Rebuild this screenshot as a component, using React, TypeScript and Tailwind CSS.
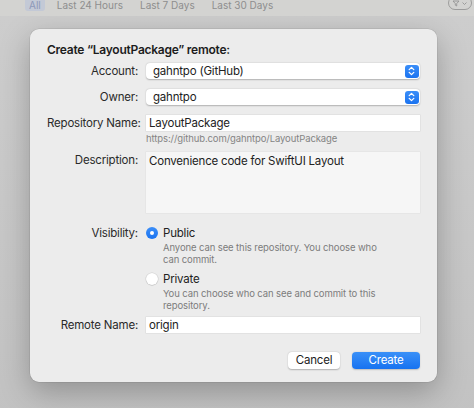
import React from 'react';

const font = { fontFamily: 'Inter, "Liberation Sans", sans-serif' };

const Stepper = () => (
  <span className="flex h-[13px] w-[14px] items-center justify-center rounded-[3px] bg-gradient-to-b from-[#3b8ef8] to-[#1a73f0]">
    <svg width="7" height="10" viewBox="0 0 7 10" fill="none" stroke="white" strokeWidth="1.3" strokeLinecap="round" strokeLinejoin="round">
      <path d="M1.2 3.6 3.5 1.4 5.8 3.6" />
      <path d="M1.2 6.4 3.5 8.6 5.8 6.4" />
    </svg>
  </span>
);

const Popup = ({ value }: { value: string }) => (
  <div className="flex h-[16px] items-center justify-between rounded-[4px] bg-white pl-[7px] pr-[1.5px] shadow-[0_0.5px_1.5px_rgba(0,0,0,0.25)]">
    <span className="text-[11.5px] leading-[16px] tracking-[-0.2px] text-[#222]">{value}</span>
    <Stepper />
  </div>
);

const Field = ({ value }: { value: string }) => (
  <div className="flex h-[16px] items-center bg-white pl-[3px] shadow-[0_0_0_0.5px_rgba(0,0,0,0.08)]">
    <span className="text-[11.5px] leading-[16px] tracking-[-0.2px] text-[#222]">{value}</span>
  </div>
);

const Label = ({ children }: { children: React.ReactNode }) => (
  <span className="whitespace-nowrap text-right text-[11.5px] leading-[16px] tracking-[-0.2px] text-[#2a2a2a]">{children}</span>
);

const App = () => {
  return (
    <div className="relative h-[408px] w-[474px] overflow-hidden bg-[#c9c9c9]" style={font}>
      {/* Window behind */}
      <div className="relative flex h-[16px] items-start bg-[#d3d3d1] pl-[25px] text-[10px] leading-[10px] text-[#8e8e8e]">
        <span className="rounded-b-[3px] bg-[#c3c9d6] px-[4px] pb-[1px] text-[#8e98b8]">All</span>
        <span className="ml-[12px]">Last 24 Hours</span>
        <span className="ml-[17px]">Last 7 Days</span>
        <span className="ml-[17px]">Last 30 Days</span>
        <svg className="absolute right-[2px] top-[-4px]" width="24" height="14" viewBox="0 0 24 14" fill="none" stroke="#8e8e8e" strokeWidth="0.8">
          <rect x="0.5" y="0.5" width="23" height="13" rx="6.5" />
          <path d="M5 5h6l-2.3 2.6v2.4l-1.4-.8V7.6z" />
          <path d="M14.5 6.5 16.5 8.5 18.5 6.5" />
        </svg>
      </div>

      <div className="bg-gradient-to-b from-[#cdcdcd] to-[#c2c2c2] pl-[30px] pt-[13px]">
        {/* Dialog */}
        <div className="h-[353px] w-[407px] rounded-[9px] bg-[#ececec] px-[17px] pt-[14px] shadow-[0_10px_30px_rgba(0,0,0,0.26),0_0_0_0.5px_rgba(0,0,0,0.12)]">
          <div className="text-[12px] font-semibold leading-[14px] tracking-[-0.25px] text-[#1c1c1c]">Create “LayoutPackage” remote:</div>

          <div className="mt-[6px] grid grid-cols-[91px_1fr] items-center gap-x-[8px]">
            <Label>Account:</Label>
            <Popup value="gahntpo (GitHub)" />

            <div className="col-span-2 h-[10px]" />
            <Label>Owner:</Label>
            <Popup value="gahntpo" />

            <div className="col-span-2 h-[10px]" />
            <Label>Repository Name:</Label>
            <Field value="LayoutPackage" />

            <div />
            <span className="text-[9.5px] leading-[15px] tracking-[-0.1px] text-[#848484]">https://github.com/gahntpo/LayoutPackage</span>

            <div className="col-span-2 h-[6px]" />
            <span className="self-start text-right text-[11.5px] leading-[16px] tracking-[-0.2px] text-[#2a2a2a]">Description:</span>
            <div className="h-[61px] bg-[#f6f6f6] pl-[3px] pt-[1px] text-[11.5px] leading-[16px] tracking-[-0.2px] text-[#222] shadow-[0_0_0_0.5px_rgba(0,0,0,0.05)]">
              Convenience code for SwiftUI Layout
            </div>

            <div className="col-span-2 h-[12.5px]" />
            <span className="self-start text-right text-[11.5px] leading-[15px] tracking-[-0.2px] text-[#2a2a2a]">Visibility:</span>
            <div className="flex flex-col">
              <div className="flex items-center gap-[5px]">
                <span className="flex h-[12px] w-[12px] items-center justify-center rounded-full bg-gradient-to-b from-[#3b8ef8] to-[#1a73f0]">
                  <span className="h-[4.5px] w-[4.5px] rounded-full bg-white" />
                </span>
                <span className="text-[11.5px] leading-[15px] tracking-[-0.2px] text-[#222]">Public</span>
              </div>
              <p className="ml-[17px] mt-[1.5px] text-[9.5px] leading-[11.7px] tracking-[-0.1px] text-[#7c7c7c]">
                Anyone can see this repository. You choose who
                <br />
                can commit.
              </p>
              <div className="mt-[6.5px] flex items-center gap-[5px]">
                <span className="h-[12px] w-[12px] rounded-full bg-white shadow-[0_0_0_0.5px_rgba(0,0,0,0.12),0_0.5px_1px_rgba(0,0,0,0.15)]" />
                <span className="text-[11.5px] leading-[15px] tracking-[-0.2px] text-[#222]">Private</span>
              </div>
              <p className="ml-[17px] mt-[1.5px] text-[9.5px] leading-[11.7px] tracking-[-0.1px] text-[#7c7c7c]">
                You can choose who can see and commit to this
                <br />
                repository.
              </p>
            </div>

            <div className="col-span-2 h-[5px]" />
            <Label>Remote Name:</Label>
            <Field value="origin" />
          </div>

          <div className="mt-[19px] flex justify-end gap-[12px]">
            <button className="flex h-[17px] w-[52px] items-center justify-center rounded-[4px] bg-white text-[11.5px] tracking-[-0.2px] text-[#222] shadow-[0_0.5px_1.5px_rgba(0,0,0,0.25)]">
              Cancel
            </button>
            <button className="flex h-[17px] w-[68px] items-center justify-center rounded-[4px] bg-gradient-to-b from-[#3990f8] to-[#1672f0] text-[11.5px] tracking-[-0.2px] text-white shadow-[0_0.5px_1.5px_rgba(0,0,0,0.2)]">
              Create
            </button>
          </div>
        </div>
        <div className="h-[40px]" />
      </div>
    </div>
  );
};

export default App;
